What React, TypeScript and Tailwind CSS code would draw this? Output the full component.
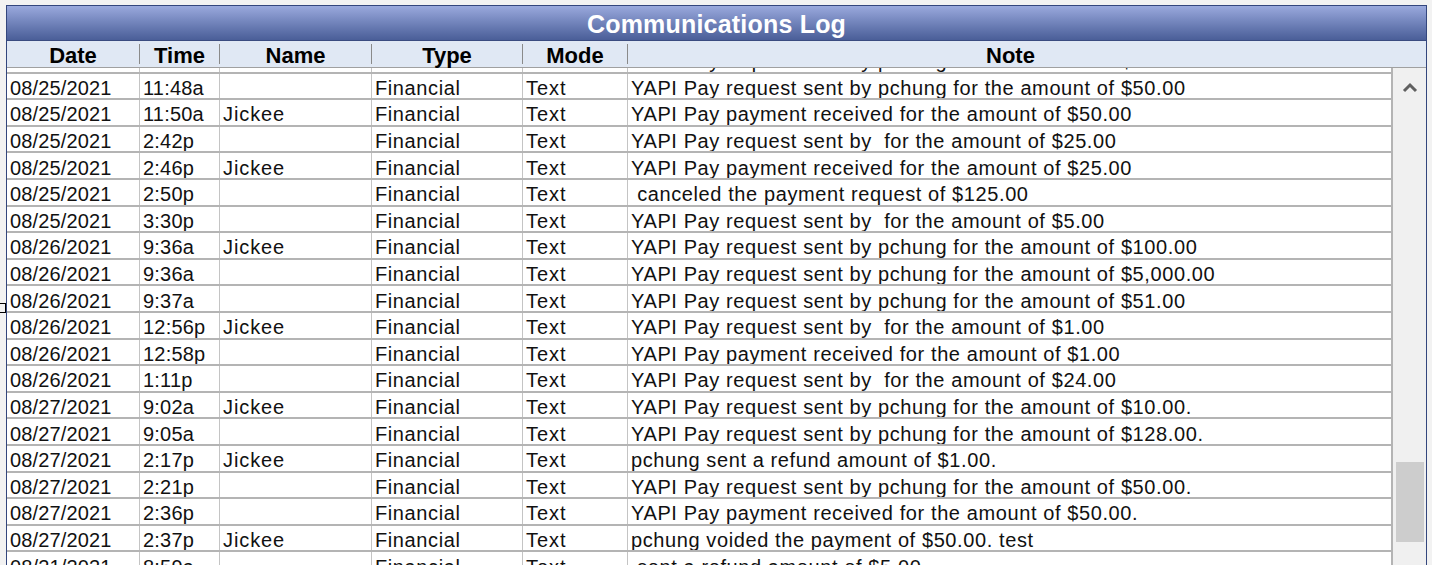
import React from 'react'

type Row = {
  date: string
  time: string
  name: string
  type: string
  mode: string
  note: string
}

// first row is scrolled mostly out of view; only the note's descenders show
const rows: Row[] = [
  { date: '', time: '', name: '', type: '', mode: '', note: 'YAPI Pay request sent by pchung for the amount of $50.00' },
  { date: '08/25/2021', time: '11:48a', name: '', type: 'Financial', mode: 'Text', note: 'YAPI Pay request sent by pchung for the amount of $50.00' },
  { date: '08/25/2021', time: '11:50a', name: 'Jickee', type: 'Financial', mode: 'Text', note: 'YAPI Pay payment received for the amount of $50.00' },
  { date: '08/25/2021', time: '2:42p', name: '', type: 'Financial', mode: 'Text', note: 'YAPI Pay request sent by\u00a0 for the amount of $25.00' },
  { date: '08/25/2021', time: '2:46p', name: 'Jickee', type: 'Financial', mode: 'Text', note: 'YAPI Pay payment received for the amount of $25.00' },
  { date: '08/25/2021', time: '2:50p', name: '', type: 'Financial', mode: 'Text', note: '\u00a0canceled the payment request of $125.00' },
  { date: '08/25/2021', time: '3:30p', name: '', type: 'Financial', mode: 'Text', note: 'YAPI Pay request sent by\u00a0 for the amount of $5.00' },
  { date: '08/26/2021', time: '9:36a', name: 'Jickee', type: 'Financial', mode: 'Text', note: 'YAPI Pay request sent by pchung for the amount of $100.00' },
  { date: '08/26/2021', time: '9:36a', name: '', type: 'Financial', mode: 'Text', note: 'YAPI Pay request sent by pchung for the amount of $5,000.00' },
  { date: '08/26/2021', time: '9:37a', name: '', type: 'Financial', mode: 'Text', note: 'YAPI Pay request sent by pchung for the amount of $51.00' },
  { date: '08/26/2021', time: '12:56p', name: 'Jickee', type: 'Financial', mode: 'Text', note: 'YAPI Pay request sent by\u00a0 for the amount of $1.00' },
  { date: '08/26/2021', time: '12:58p', name: '', type: 'Financial', mode: 'Text', note: 'YAPI Pay payment received for the amount of $1.00' },
  { date: '08/26/2021', time: '1:11p', name: '', type: 'Financial', mode: 'Text', note: 'YAPI Pay request sent by\u00a0 for the amount of $24.00' },
  { date: '08/27/2021', time: '9:02a', name: 'Jickee', type: 'Financial', mode: 'Text', note: 'YAPI Pay request sent by pchung for the amount of $10.00.' },
  { date: '08/27/2021', time: '9:05a', name: '', type: 'Financial', mode: 'Text', note: 'YAPI Pay request sent by pchung for the amount of $128.00.' },
  { date: '08/27/2021', time: '2:17p', name: 'Jickee', type: 'Financial', mode: 'Text', note: 'pchung sent a refund amount of $1.00.' },
  { date: '08/27/2021', time: '2:21p', name: '', type: 'Financial', mode: 'Text', note: 'YAPI Pay request sent by pchung for the amount of $50.00.' },
  { date: '08/27/2021', time: '2:36p', name: '', type: 'Financial', mode: 'Text', note: 'YAPI Pay payment received for the amount of $50.00.' },
  { date: '08/27/2021', time: '2:37p', name: 'Jickee', type: 'Financial', mode: 'Text', note: 'pchung voided the payment of $50.00. test' },
  { date: '08/21/2021', time: '8:59a', name: '', type: 'Financial', mode: 'Text', note: '\u00a0sent a refund amount of $5.00' },
]

const cell = 'h-full flex items-center pt-[4px] pl-[3px] border-r border-[#c4c4c4] whitespace-pre overflow-hidden'

function HeaderCell({ label, width }: { label: string; width: string }) {
  return (
    <div className={`${width} h-full flex items-center`}>
      <span className="flex-1 text-center pt-[3px]">{label}</span>
      <div className="w-px h-[20px] bg-[#8a8a8a]" />
    </div>
  )
}

export default function App() {
  return (
    <div className="w-[1432px] h-[565px] overflow-hidden bg-[#f2f2f2] flex font-['Liberation_Sans',Arial,sans-serif]">
      {/* left gutter */}
      <div className="w-[6px] shrink-0">
        <div className="mt-[303px] w-[6px] h-[10px] border-y border-r border-black" />
      </div>

      <div className="w-[1421px] shrink-0 mt-[5px] border-x border-t border-[#33467d] flex flex-col">
        {/* title */}
        <div className="h-[35px] shrink-0 bg-gradient-to-b from-[#9aa9dd] to-[#4a5e98] border-b border-[#3a4b80] flex items-center justify-center">
          <span className="text-white font-bold text-[25px] leading-none pt-[2px] tracking-[0.2px]">Communications Log</span>
        </div>

        {/* header */}
        <div className="h-[27px] shrink-0 bg-[#e0e8f4] border-b border-[#a0a0a0] flex text-[22px] font-bold text-black leading-[22px]">
          <HeaderCell label="Date" width="w-[133px]" />
          <HeaderCell label="Time" width="w-[80px]" />
          <HeaderCell label="Name" width="w-[152px]" />
          <HeaderCell label="Type" width="w-[151px]" />
          <HeaderCell label="Mode" width="w-[105px]" />
          <div className="w-[765px] h-full flex items-center justify-center pt-[3px]">Note</div>
        </div>

        {/* body */}
        <div className="flex-1 flex overflow-hidden bg-white">
          <div className="w-[1386px] overflow-hidden">
            <div className="mt-[-21px] text-[20px] text-[#111] leading-[20px]">
              {rows.map((r, i) => (
                <div key={i} className="h-[26.6px] flex border-b-2 border-[#b4b4b4]">
                  <div className={`${cell} w-[133px] tracking-[0.15px]`}>{r.date}</div>
                  <div className={`${cell} w-[80px] tracking-[0.2px]`}>{r.time}</div>
                  <div className={`${cell} w-[152px] tracking-[0.9px]`}>{r.name}</div>
                  <div className={`${cell} w-[151px] tracking-[0.6px]`}>{r.type}</div>
                  <div className={`${cell} w-[105px] tracking-[1px]`}>{r.mode}</div>
                  <div className={`${cell} w-[765px] border-r-2 border-r-[#b4b4b4] tracking-[0.6px]`}>{r.note}</div>
                </div>
              ))}
            </div>
          </div>

          {/* scrollbar */}
          <div className="w-[33px] bg-[#f0f0f0] flex flex-col items-center">
            <svg width="16" height="12" viewBox="0 0 16 12" className="mt-[13px]">
              <path d="M2 10 L8 4 L14 10" fill="none" stroke="#606060" strokeWidth="3" />
            </svg>
            <div className="mt-[369px] w-[28px] h-[80px] bg-[#cdcdcd]" />
          </div>
        </div>
      </div>
    </div>
  )
}
